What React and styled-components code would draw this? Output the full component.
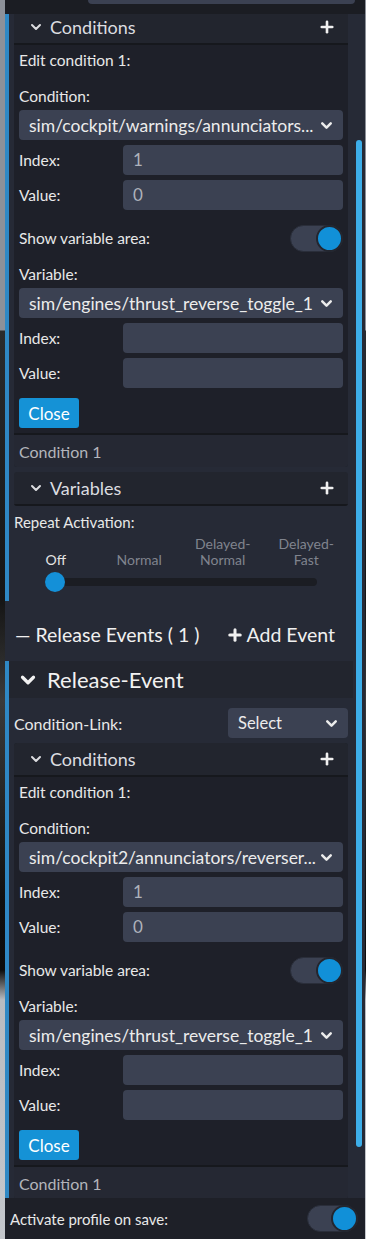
import React from "react";
import styled, { createGlobalStyle } from "styled-components";
import { ChevronDown, Plus } from "lucide-react";

const GlobalStyle = createGlobalStyle`
  html, body {
    margin: 0;
    padding: 0;
    height: 1239px;
    overflow: hidden;
    background: linear-gradient(
      180deg,
      #8d9199 0px,
      #8d9199 330px,
      #2a2b2d 331px,
      #151515 600px,
      #3a3a3a 700px,
      #101010 900px,
      #0c0c0c 970px,
      #b9bcc1 1000px,
      #c4c7cc 1239px
    );
    font-family: "Lato", "Liberation Sans", sans-serif;
  }
  * { box-sizing: border-box; }
`;

const Shell = styled.div`
  margin-left: 5px;
  width: 360px;
  height: 1239px;
  display: flex;
  flex-direction: column;
  background: #262a36;
  color: #e8e8e8;
`;

const TopStrip = styled.div`
  height: 14px;
  flex-shrink: 0;
  background: #1b1d23;
  padding-left: 83px;
`;

const TopInput = styled.div`
  width: 267px;
  height: 4px;
  background: #3b4152;
  border-radius: 0 0 4px 4px;
`;

const ScrollArea = styled.div`
  flex: 1;
  display: flex;
  overflow: hidden;
`;

const ScrollContent = styled.div`
  width: 348px;
  margin-top: -3px;
  display: flex;
  flex-direction: column;
`;

const ScrollTrack = styled.div`
  width: 12px;
  padding: 126px 3px 0;
`;

const Thumb = styled.div`
  height: 1007px;
  border-radius: 3px;
  background: #3daee9;
`;

const Card = styled.div`
  border-left: 4px solid #2f88c4;
  display: flex;
  flex-direction: column;
  padding-bottom: ${(p) => p.$pb || 0}px;
`;

const CardBody = styled.div`
  padding: 0 5px;
  display: flex;
  flex-direction: column;
`;

const EventHeader = styled.div`
  height: 37px;
  background: #22252e;
  display: flex;
  align-items: center;
  gap: 8px;
  padding-left: 8px;
  font-size: 22px;
  color: #f2f2f2;
`;

const LinkRow = styled.div`
  display: flex;
  align-items: center;
  justify-content: space-between;
  padding: 10px 0 5px;
  font-size: 16px;
`;

const Box = styled.div`
  background: #1e2029;
  border-radius: 3px;
  overflow: hidden;
  margin-bottom: ${(p) => p.$mb || 0}px;
`;

const BoxHeader = styled.div`
  height: 34px;
  background: #22252e;
  border-bottom: 2px solid #16181d;
  display: flex;
  align-items: center;
  padding: 0 12px 0 14px;
  font-size: 18px;
  color: #dcdde0;
`;

const BoxTitle = styled.span`
  flex: 1;
  margin-left: 6px;
`;

const BoxBody = styled.div`
  padding: 5px;
  display: flex;
  flex-direction: column;
`;

const Label = styled.div`
  height: 20px;
  line-height: 20px;
  font-size: 15.5px;
  margin-top: ${(p) => p.$mt || 0}px;
`;

const SelectBox = styled.div`
  height: 30px;
  margin-top: ${(p) => p.$mt || 0}px;
  width: ${(p) => p.$w || "100%"};
  background: #3b4152;
  border-radius: 4px;
  display: flex;
  align-items: center;
  padding: 0 8px 0 10px;
  font-size: ${(p) => p.$fs || 17.5}px;
  color: #ececec;
`;

const SelectText = styled.span`
  flex: 1;
  white-space: nowrap;
`;

const FieldRow = styled.div`
  display: flex;
  align-items: center;
  margin-top: 5px;
  height: 30px;
  font-size: 15.5px;
`;

const FieldLabel = styled.span`
  width: 104px;
`;

const Input = styled.div`
  flex: 1;
  height: 30px;
  background: #3b4152;
  border-radius: 4px;
  padding-left: 10px;
  line-height: 30px;
  font-size: 17px;
  color: #aeb2bb;
`;

const ToggleRow = styled.div`
  display: flex;
  align-items: center;
  justify-content: space-between;
  height: 28px;
  margin-top: ${(p) => p.$mt || 0}px;
  font-size: 15.5px;
`;

const Toggle = styled.div`
  width: ${(p) => p.$w || 53}px;
  height: 27px;
  border-radius: 14px;
  background: #3b4152;
  border: 1px solid #2a2e3a;
  display: flex;
  justify-content: flex-end;
  align-items: center;
`;

const Knob = styled.div`
  width: 27px;
  height: 27px;
  border-radius: 50%;
  background: #1190d8;
  border: 2px solid #23262f;
  margin-right: -1px;
`;

const CloseButton = styled.button`
  margin-top: 10px;
  width: 60px;
  height: 30px;
  border: none;
  border-radius: 3px;
  background: #1592d6;
  color: #ffffff;
  font-family: inherit;
  font-size: 17px;
  padding: 0;
`;

const ItemRow = styled.div`
  border-top: 2px solid #16181d;
  background: #252833;
  height: 34px;
  display: flex;
  align-items: center;
  padding-left: 5px;
  font-size: 16px;
  color: #b3b5bb;
`;

const SectionLabel = styled.div`
  margin-top: 6px;
  height: 20px;
  line-height: 20px;
  font-size: 15px;
`;

const SliderLabels = styled.div`
  display: grid;
  grid-template-columns: repeat(4, 1fr);
  align-items: end;
  margin-top: 4px;
`;

const SliderLabel = styled.div`
  text-align: center;
  font-size: 14px;
  line-height: 16px;
  color: ${(p) => (p.$active ? "#e4e4e4" : "#80848e")};
`;

const Track = styled.div`
  position: relative;
  margin: 10px 31px 0 31px;
  height: 8px;
  border-radius: 4px;
  background: #1b1d23;
`;

const SliderKnob = styled.div`
  position: absolute;
  left: 0;
  top: -6px;
  width: 20px;
  height: 20px;
  border-radius: 50%;
  background: #1490d8;
`;

const EventsHeader = styled.div`
  display: flex;
  align-items: center;
  justify-content: space-between;
  padding: 22px 18px 14px 10px;
  font-size: 19.5px;
  line-height: 24px;
  color: #f0f0f0;
`;

const AddEvent = styled.span`
  display: flex;
  align-items: center;
  gap: 3px;
`;

const Footer = styled.div`
  height: 41px;
  flex-shrink: 0;
  background: #1e2028;
  display: flex;
  align-items: center;
  justify-content: space-between;
  padding: 0 7px 0 5px;
  font-size: 15px;
`;

const ConditionBox = ({ condition, mb }) => (
  <Box $mb={mb}>
    <BoxHeader>
      <ChevronDown size={16} strokeWidth={3} />
      <BoxTitle>Conditions</BoxTitle>
      <Plus size={18} strokeWidth={3.5} color="#f0f0f0" />
    </BoxHeader>
    <BoxBody>
      <Label>Edit condition 1:</Label>
      <Label $mt={16}>Condition:</Label>
      <SelectBox $mt={4}>
        <SelectText>{condition}</SelectText>
        <ChevronDown size={17} strokeWidth={3.5} />
      </SelectBox>
      <FieldRow>
        <FieldLabel>Index:</FieldLabel>
        <Input>1</Input>
      </FieldRow>
      <FieldRow>
        <FieldLabel>Value:</FieldLabel>
        <Input>0</Input>
      </FieldRow>
      <ToggleRow $mt={14}>
        <span>Show variable area:</span>
        <Toggle>
          <Knob />
        </Toggle>
      </ToggleRow>
      <Label $mt={12}>Variable:</Label>
      <SelectBox $mt={4}>
        <SelectText>sim/engines/thrust_reverse_toggle_1</SelectText>
        <ChevronDown size={17} strokeWidth={3.5} />
      </SelectBox>
      <FieldRow>
        <FieldLabel>Index:</FieldLabel>
        <Input />
      </FieldRow>
      <FieldRow>
        <FieldLabel>Value:</FieldLabel>
        <Input />
      </FieldRow>
      <CloseButton>Close</CloseButton>
    </BoxBody>
    <ItemRow>Condition 1</ItemRow>
  </Box>
);

const modes = [
  { label: "Off", active: true },
  { label: "Normal" },
  { label: ["Delayed-", "Normal"] },
  { label: ["Delayed-", "Fast"] },
];

const App = () => {
  return (
    <>
      <GlobalStyle />
      <Shell>
        <TopStrip>
          <TopInput />
        </TopStrip>
        <ScrollArea>
          <ScrollContent>
            <Card $pb={15}>
              <CardBody>
                <ConditionBox
                  condition="sim/cockpit/warnings/annunciators..."
                  mb={5}
                />
                <Box>
                  <BoxHeader>
                    <ChevronDown size={16} strokeWidth={3} />
                    <BoxTitle>Variables</BoxTitle>
                    <Plus size={18} strokeWidth={3.5} color="#f0f0f0" />
                  </BoxHeader>
                </Box>
                <SectionLabel>Repeat Activation:</SectionLabel>
                <SliderLabels>
                  {modes.map((m, i) => (
                    <SliderLabel key={i} $active={m.active}>
                      {Array.isArray(m.label) ? (
                        <>
                          {m.label[0]}
                          <br />
                          {m.label[1]}
                        </>
                      ) : (
                        m.label
                      )}
                    </SliderLabel>
                  ))}
                </SliderLabels>
                <Track>
                  <SliderKnob />
                </Track>
              </CardBody>
            </Card>

            <EventsHeader>
              <span>— Release Events ( 1 )</span>
              <AddEvent>
                <Plus size={18} strokeWidth={4} />
                Add Event
              </AddEvent>
            </EventsHeader>

            <Card>
              <EventHeader>
                <ChevronDown size={22} strokeWidth={3.5} />
                <span>Release-Event</span>
              </EventHeader>
              <CardBody>
                <LinkRow>
                  <span>Condition-Link:</span>
                  <SelectBox $w="120px" $fs={16.5}>
                    <SelectText>Select</SelectText>
                    <ChevronDown size={17} strokeWidth={3.5} />
                  </SelectBox>
                </LinkRow>
                <ConditionBox condition="sim/cockpit2/annunciators/reverser..." />
              </CardBody>
            </Card>
          </ScrollContent>
          <ScrollTrack>
            <Thumb />
          </ScrollTrack>
        </ScrollArea>
        <Footer>
          <span>Activate profile on save:</span>
          <Toggle $w={51}>
            <Knob />
          </Toggle>
        </Footer>
      </Shell>
    </>
  );
};

export default App;
